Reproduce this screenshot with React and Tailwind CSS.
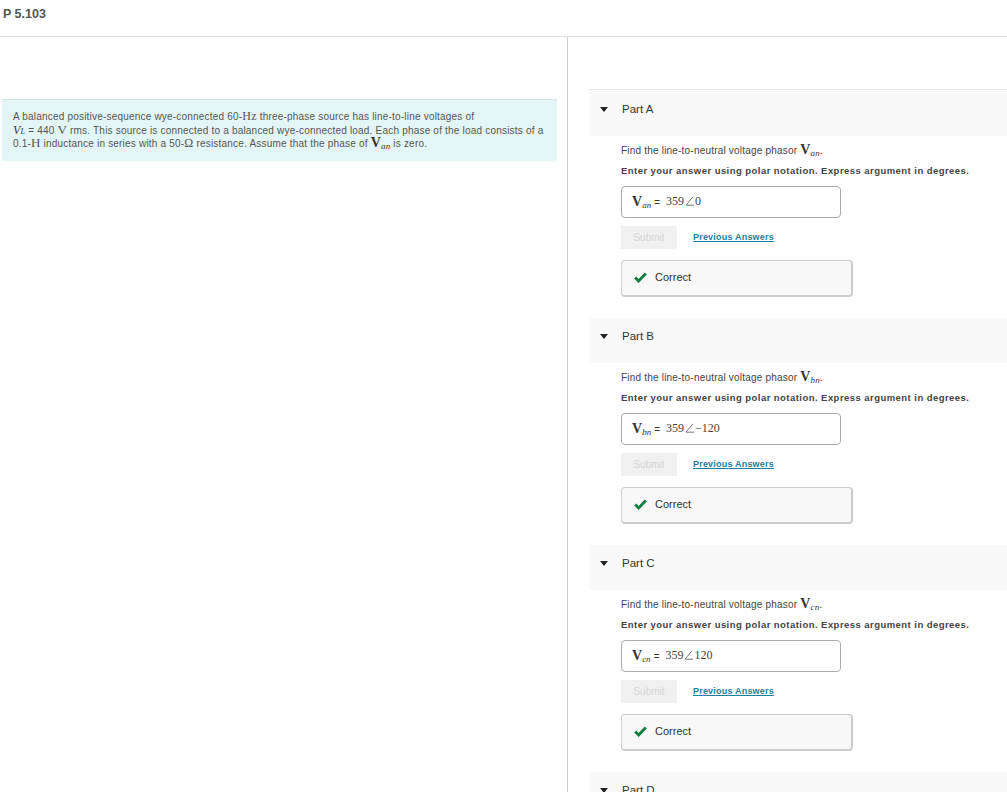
import React from "react";

function Tri() {
    return <span className="w-0 h-0 border-l-[4px] border-r-[4px] border-t-[5px] border-l-transparent border-r-transparent border-t-[#222]" />;
}

function Vec({ sub, suffix }) {
    return (
        <span className="font-['Liberation_Serif',serif] text-[#333]">
            <b className="text-[14px] leading-none">V</b>
            <i className="text-[9px] leading-none relative top-[2px]">{sub}</i>
            {suffix}
        </span>
    );
}

function Check() {
    return (
        <svg width="13" height="11" viewBox="0 0 13 11" className="shrink-0">
            <path d="M1.2 5.6 L4.6 9 L11.8 1.6" fill="none" stroke="#0a7d3c" strokeWidth="2.8" />
        </svg>
    );
}

function Angle() {
    return (
        <svg width="9" height="10" viewBox="0 0 9 10" className="inline-block mx-[1px]">
            <path d="M8 0.8 L1 9.2 H9" fill="none" stroke="#555" strokeWidth="0.8" />
        </svg>
    );
}

function Part({ name, sub, mag, arg, height }) {
    return (
        <section>
            <div className="h-[45px] bg-[#f9f9f9] flex items-start pt-[12px] pl-[11px]">
                <span className="w-[22px] h-[12px] flex items-center"><Tri /></span>
                <span className="text-[11.5px] leading-[13px] text-[#333]">Part {name}</span>
            </div>
            {sub && (
                <div className={`pl-[32px] ${height}`}>
                    <p className="pt-[7px] h-[27px] text-[10px] leading-[16px] tracking-[0.2px] text-[#444]">
                        Find the line-to-neutral voltage phasor <Vec sub={sub} suffix="." />
                    </p>
                    <p className="pt-[1px] text-[9.5px] leading-[14px] font-bold tracking-[0.45px] text-[#444]">
                        Enter your answer using polar notation. Express argument in degrees.
                    </p>
                    <div className="mt-[8px] w-[220px] h-[32px] pb-[2px] border border-[#aaa] rounded-[4px] flex items-center pl-[10px] gap-[6px]">
                        <span className="whitespace-nowrap">
                            <Vec sub={sub} /><span className="text-[10px] text-[#333] ml-[3px]">=</span>
                        </span>
                        <span className="font-['Liberation_Serif',serif] text-[12px] text-[#444] flex items-center">
                            {mag}<Angle />{arg}
                        </span>
                    </div>
                    <div className="mt-[8px] flex items-center gap-[16px]">
                        <span className="w-[56px] h-[23px] bg-[#f0f0f0] text-[#d6d6d6] text-[10px] flex items-center justify-center">Submit</span>
                        <a className="text-[9px] tracking-[0.2px] font-bold text-[#1a7f9c] underline">Previous Answers</a>
                    </div>
                    <div className="mt-[11px] w-[232px] h-[37px] pb-[2px] bg-[#f8f8f8] border border-[#ccc] border-r-2 border-b-2 rounded-[4px] flex items-center pl-[12px] gap-[8px]">
                        <Check />
                        <span className="text-[11px] text-[#333]">Correct</span>
                    </div>
                </div>
            )}
        </section>
    );
}

export default function App() {
    return (
        <div className="h-[792px] overflow-hidden bg-white font-['Liberation_Sans',sans-serif]">
            <header className="h-[37px] border-b border-[#e0e0e0] pl-[3px] pt-[6px]">
                <h1 className="text-[12.5px] leading-[16px] font-bold text-[#555]">P 5.103</h1>
            </header>
            <div className="flex h-[755px]">
                <div className="w-[568px] shrink-0 border-r border-[#c8ccd0] pt-[62px] pl-[2px] pr-[10px]">
                    <div className="h-[62px] bg-[#e4f5f5] border-t border-[#d5e5e5] pl-[11px] pt-[10px] text-[10px] tracking-[0.2px] text-[#555]">
                        <p className="h-[13px] leading-[13px] whitespace-nowrap">
                            A balanced positive-sequence wye-connected 60-<span className="font-['Liberation_Serif',serif] text-[12px] leading-none">Hz</span> three-phase source has line-to-line voltages of
                        </p>
                        <p className="h-[13px] leading-[13px] whitespace-nowrap">
                            <span className="font-['Liberation_Serif',serif] text-[#333] leading-none"><i className="text-[12px]">V</i><i className="text-[8px]">L</i></span> = 440 <span className="font-['Liberation_Serif',serif] text-[13px] leading-none">V</span> rms. This source is connected to a balanced wye-connected load. Each phase of the load consists of a
                        </p>
                        <p className="h-[13px] leading-[13px] whitespace-nowrap">
                            0.1-<span className="font-['Liberation_Serif',serif] text-[13px] leading-none">H</span> inductance in series with a 50-<span className="font-['Liberation_Serif',serif] text-[12px] leading-none">Ω</span> resistance. Assume that the phase of <Vec sub="an" /> is zero.
                        </p>
                    </div>
                </div>
                <div className="flex-1 min-w-0 pt-[52px] pl-[21px]">
                    <div className="border-t border-[#e4e4e4] pt-[1px]">
                        <Part name="A" sub="an" mag="359" arg="0" height="h-[182px]" />
                        <Part name="B" sub="bn" mag="359" arg="−120" height="h-[182px]" />
                        <Part name="C" sub="cn" mag="359" arg="120" height="h-[182px]" />
                        <Part name="D" />
                    </div>
                </div>
            </div>
        </div>
    );
}
